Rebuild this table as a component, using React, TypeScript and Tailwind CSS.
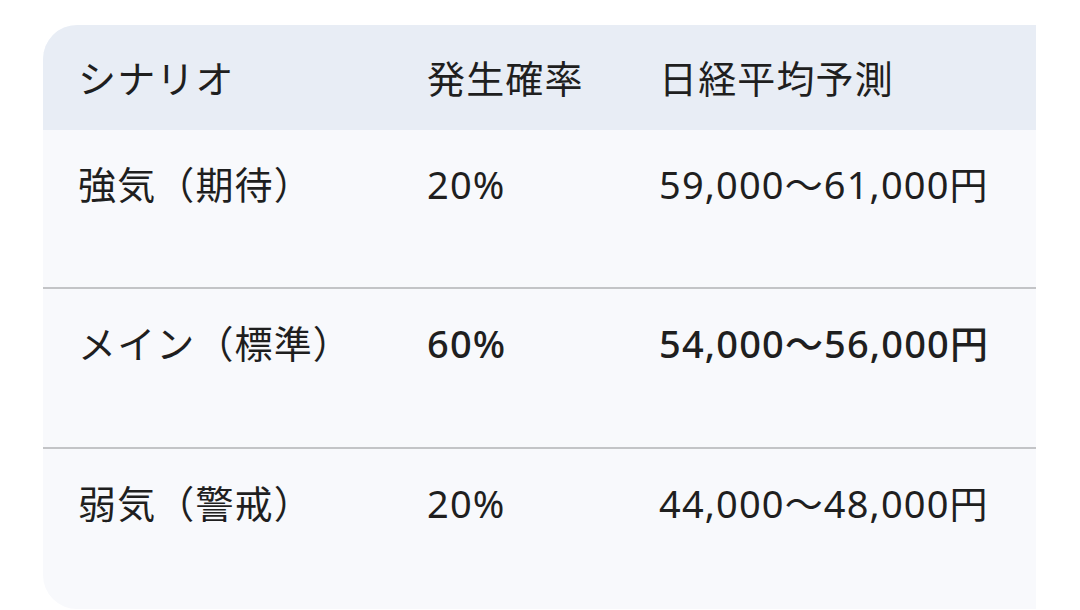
const rows = [
  { name: '強気（期待）', prob: '20%', range: '59,000～61,000円', strong: false, h: 'h-[159px]' },
  { name: 'メイン（標準）', prob: '60%', range: '54,000～56,000円', strong: true, h: 'h-[160px]' },
  { name: '弱気（警戒）', prob: '20%', range: '44,000～48,000円', strong: false, h: 'h-[160px]' },
];

export default function App() {
  return (
    <div
      className="min-h-screen bg-white pl-[43px] pt-[25px] text-[38px] tracking-[0.03em] text-[#1f1f1f]"
      style={{ fontFamily: '"Noto Sans", "Noto Sans CJK JP", sans-serif' }}
    >
      <div className="w-[993px] overflow-hidden rounded-l-[34px] bg-[#f8f9fc]">
        {/* ヘッダー */}
        <div className="flex h-[105px] items-center bg-[#e8edf5] leading-none">
          <div className="w-[384px] shrink-0 pl-[35px]">シナリオ</div>
          <div className="w-[232px] shrink-0">発生確率</div>
          <div className="shrink-0 whitespace-nowrap">日経平均予測</div>
        </div>

        {rows.map((row, i) => (
          <div
            key={row.name}
            className={
              i < rows.length - 1
                ? `flex ${row.h} border-b-2 border-[#c3c4c7] pt-[35px] leading-none`
                : `flex ${row.h} pt-[35px] leading-none`
            }
          >
            <div className="w-[384px] shrink-0 pl-[35px]">{row.name}</div>
            <div className={row.strong ? 'w-[232px] shrink-0 font-medium' : 'w-[232px] shrink-0'}>{row.prob}</div>
            <div className={row.strong ? 'shrink-0 whitespace-nowrap font-medium' : 'shrink-0 whitespace-nowrap'}>
              {row.range}
            </div>
          </div>
        ))}
      </div>
    </div>
  );
}
